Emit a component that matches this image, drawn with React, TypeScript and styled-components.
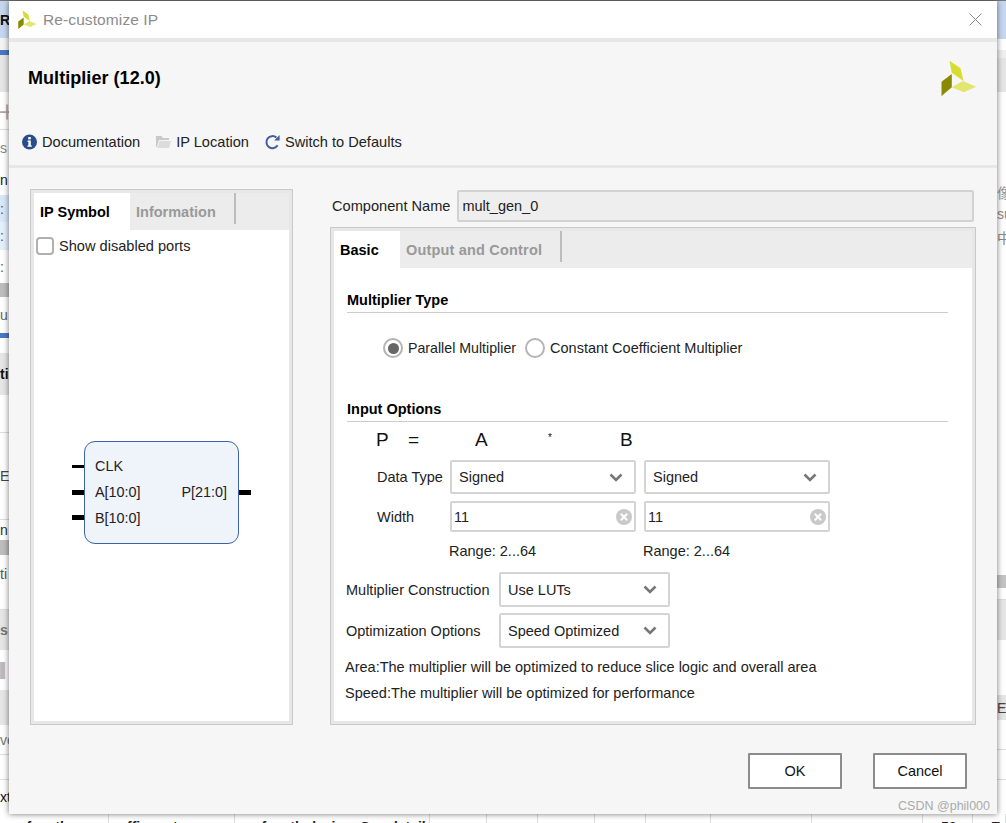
import React from "react";
import styled, { createGlobalStyle } from "styled-components";

const Global = createGlobalStyle`
  html, body { margin: 0; padding: 0; background: #fff; }
  body { font-family: "Liberation Sans", Arial, "Noto Sans CJK SC", sans-serif; color: #1c1c1c; }
`;

const Page = styled.div`
  position: relative;
  width: 1006px;
  height: 823px;
  overflow: hidden;
  background: #fff;
`;

const Backdrop = styled.div`
  display: grid;
  grid-template-columns: 9px 988px 9px;
  grid-template-rows: 814px 9px;
  width: 1006px;
  height: 823px;
`;

const Strip = styled.div`
  display: flex;
  flex-direction: column;
  overflow: hidden;
  background: #fff;
`;

const Segment = styled.div<{ $h: number; $bg?: string; $bold?: boolean; $fg?: string; $line?: boolean }>`
  flex: 0 0 ${(p) => p.$h}px;
  display: flex;
  align-items: center;
  justify-content: flex-start;
  overflow: hidden;
  white-space: nowrap;
  background: ${(p) => p.$bg ?? "#fff"};
  color: ${(p) => p.$fg ?? "#666"};
  font-size: 14px;
  font-weight: ${(p) => (p.$bold ? 700 : 400)};
  box-sizing: border-box;
  border-bottom: ${(p) => (p.$line ? "1px solid #ddd" : "0")};
`;

const Spacer = styled.div`
  background: #fff;
`;

const BottomStrip = styled.div`
  grid-column: 1 / -1;
  display: grid;
  grid-template-columns: 109px 126px 195px 57px 51px 57px 51px 65px 101px 111px 50px 1fr;
  background: #fff;
  overflow: hidden;
`;

const BottomCell = styled.div`
  border-right: 1px solid #ddd;
  overflow: hidden;
  white-space: nowrap;
  font-size: 14px;
  font-weight: 700;
  color: #222;
  padding: 6px 0 0 18px;
  line-height: 14px;
  box-sizing: border-box;
`;

const Dialog = styled.div`
  position: absolute;
  left: 9px;
  top: 1px;
  width: 988px;
  height: 813px;
  display: flex;
  flex-direction: column;
  background: #f6f6f6;
  box-shadow: 0 0 6px rgba(0, 0, 0, 0.55);
`;

const TopEdge = styled.div`
  position: absolute;
  left: 0;
  top: 0;
  width: 1006px;
  height: 1px;
  background: #777;
`;

const TitleBar = styled.div`
  flex: 0 0 41px;
  box-sizing: border-box;
  display: flex;
  align-items: center;
  gap: 6px;
  padding: 0 15px 0 9px;
  background: #fff;
  border-bottom: 4px solid #e7e7e7;
`;

const TitleText = styled.span`
  flex: 1;
  font-size: 15.5px;
  letter-spacing: 0.1px;
  color: #8c8c8c;
`;

const Header = styled.div`
  flex: 0 0 83px;
  box-sizing: border-box;
  display: flex;
  align-items: flex-start;
  justify-content: space-between;
  padding: 18px 20px 0 19px;
`;

const Heading = styled.h1`
  margin: 0;
  height: 36px;
  line-height: 36px;
  font-size: 18px;
  letter-spacing: 0.05px;
  font-weight: 700;
  color: #000;
`;

const Toolbar = styled.div`
  flex: 0 0 43px;
  box-sizing: border-box;
  display: flex;
  align-items: center;
  gap: 16px;
  padding: 0 0 7px 13px;
  border-bottom: 3px solid #e7e7e7;
`;

const ToolItem = styled.div`
  display: flex;
  align-items: center;
  gap: 5px;
  font-size: 14.6px;
  color: #222;
`;

const Body = styled.div`
  display: grid;
  grid-template-columns: 263px 646px;
  column-gap: 37px;
  padding: 21px 0 0 21px;
`;

const Frame = styled.div<{ $h: number }>`
  box-sizing: border-box;
  height: ${(p) => p.$h}px;
  border: 1px solid #c9c9c9;
  outline: 3px solid #e7e7e7;
  outline-offset: -4px;
  padding: 3px;
  display: flex;
  flex-direction: column;
`;

const TabStrip = styled.div`
  flex: 0 0 37px;
  display: flex;
  align-items: stretch;
  background: #ececec;
`;

const Tab = styled.div<{ $active?: boolean; $w: number; $sep?: boolean; $wide?: boolean }>`
  box-sizing: border-box;
  width: ${(p) => p.$w}px;
  display: flex;
  align-items: center;
  padding-left: 6px;
  font-size: 14.5px;
  font-weight: 700;
  letter-spacing: ${(p) => (p.$wide ? "0.18px" : "0")};
  background: ${(p) => (p.$active ? "#fff" : "transparent")};
  color: ${(p) => (p.$active ? "#000" : "#999")};
  position: relative;
  ${(p) =>
    p.$sep
      ? `&::after { content: ""; position: absolute; right: 0; top: 0; bottom: 6px; width: 2px; background: #bdbdbd; }`
      : ""}
`;

const PanelContent = styled.div`
  flex: 1;
  background: #fff;
`;

const CheckRow = styled.label`
  display: flex;
  align-items: center;
  gap: 5px;
  height: 18px;
  margin: 7px 0 0 2px;
  font-size: 14.6px;
  color: #222;
`;

const CheckBox = styled.span`
  box-sizing: border-box;
  width: 18px;
  height: 18px;
  border: 2px solid #b0b0b0;
  border-radius: 4px;
  background: #fff;
`;

const SymbolBox = styled.div`
  position: relative;
  box-sizing: border-box;
  width: 155px;
  height: 103px;
  margin: 186px 0 0 50px;
  padding: 11px 11px 0 10px;
  border: 1px solid #3d62a8;
  border-radius: 11px;
  background: #eff3fa;
  display: grid;
  grid-template-columns: 1fr auto;
  grid-auto-rows: 26px;
  align-items: center;
  font-size: 14.4px;
  color: #222;
`;

const Pin = styled.span<{ $side: "left" | "right"; $y: number; $t: number }>`
  position: absolute;
  ${(p) => p.$side}: -13px;
  top: ${(p) => p.$y}px;
  width: 12px;
  height: ${(p) => p.$t}px;
  background: #000;
`;

const RightColumn = styled.div`
  display: flex;
  flex-direction: column;
  margin-top: 1px;
`;

const NameRow = styled.div`
  display: flex;
  align-items: center;
  height: 32px;
  margin-bottom: 5px;
  padding-left: 2px;
  gap: 7px;
  font-size: 14.6px;
  color: #222;
`;

const NameInput = styled.div`
  box-sizing: border-box;
  width: 517px;
  height: 32px;
  display: flex;
  align-items: center;
  padding-left: 3px;
  font-size: 14.5px;
  color: #222;
  background: #eee;
  border: 2px solid #d2d2d2;
  border-radius: 2px;
`;

const TabContent = styled.div`
  flex: 1;
  background: #fff;
  padding: 0 24px 0 12px;
  font-size: 14.5px;
  color: #222;
`;

const SectionTitle = styled.div<{ $top: number }>`
  margin: ${(p) => p.$top}px 0 0 1px;
  height: 18px;
  line-height: 18px;
  padding-bottom: 3px;
  border-bottom: 1px solid #ccc;
  font-size: 14.5px;
  font-weight: 700;
  color: #000;
`;

const RadioRow = styled.div`
  display: flex;
  align-items: center;
  height: 20px;
  margin: 25px 0 0 37px;
  gap: 5px;
`;

const RadioLabel = styled.span<{ $size: number }>`
  margin-right: 4px;
  font-size: ${(p) => p.$size}px;
`;

const Radio = styled.span<{ $on?: boolean }>`
  box-sizing: border-box;
  width: 20px;
  height: 20px;
  border: 2px solid #b4b4b4;
  border-radius: 50%;
  background: #fff;
  display: flex;
  align-items: center;
  justify-content: center;
  &::after {
    content: "";
    display: ${(p) => (p.$on ? "block" : "none")};
    width: 11px;
    height: 11px;
    border-radius: 50%;
    background: #666;
  }
`;

const Equation = styled.div`
  display: grid;
  grid-template-columns: 32px 67px 73px 72px 20px;
  align-items: center;
  height: 18px;
  margin: 7px 0 0 30px;
  font-size: 19px;
  color: #111;
`;

const Star = styled.span`
  font-size: 10px;
  margin-top: -6px;
`;

const OptionsGrid = styled.div`
  display: grid;
  grid-template-columns: 65px 186px 186px;
  column-gap: 8px;
  grid-template-rows: 34px 31px 18px;
  row-gap: 7px;
  align-items: center;
  margin: 13px 0 0 31px;
`;

const FieldLabel = styled.span`
  white-space: nowrap;
`;

const RangeText = styled.span`
  margin-top: 5px;
  margin-left: -1px;
`;

const SelectBox = styled.div`
  box-sizing: border-box;
  height: 100%;
  display: flex;
  align-items: center;
  justify-content: space-between;
  padding: 0 11px 0 7px;
  background: #fff;
  border: 2px solid #d4d4d4;
  border-radius: 2px;
`;

const WidthBox = styled(SelectBox)`
  padding: 0 2px 0 2px;
`;

const ExtraGrid = styled.div`
  display: grid;
  grid-template-columns: 153px 171px;
  grid-template-rows: 35px 35px;
  row-gap: 6px;
  align-items: center;
  margin-top: 15px;
`;

const Note = styled.div<{ $top: number }>`
  margin: ${(p) => p.$top}px 0 0 -1px;
  height: 18px;
  line-height: 18px;
`;

const Footer = styled.div`
  display: flex;
  justify-content: flex-end;
  gap: 31px;
  padding: 28px 30px 0 0;
`;

const Button = styled.button`
  box-sizing: border-box;
  width: 94px;
  height: 36px;
  padding: 0;
  border: 2px solid #8c8c8c;
  border-radius: 1px;
  background: #fff;
  font-family: "Liberation Sans", Arial, sans-serif;
  font-size: 14.5px;
  color: #111;
`;

const Watermark = styled.span`
  position: absolute;
  right: 7px;
  bottom: 0;
  font-size: 12.5px;
  line-height: 16px;
  color: #aaa;
`;

const Logo = ({ size }: { size: number }) => (
  <svg width={size} height={size} viewBox="0 0 35 36" aria-hidden>
    <polygon points="0,21.7 10.3,14 10.3,27.3 0,36" fill="#8a8a00" />
    <polygon points="8,0.7 19,8.3 22,21 10.3,12.7" fill="#d8dc2e" />
    <polygon points="10.3,27.3 21.3,21 34.7,26.7 22.3,32.3" fill="#e2e66e" />
  </svg>
);

const CloseIcon = () => (
  <svg width="13" height="13" viewBox="0 0 13 13" aria-hidden>
    <path d="M0.5 0.5 L12.5 12.5 M12.5 0.5 L0.5 12.5" stroke="#888" strokeWidth="1" fill="none" />
  </svg>
);

const InfoIcon = () => (
  <svg width="15" height="16" viewBox="0 0 15 16" aria-hidden>
    <circle cx="7.5" cy="8" r="7.5" fill="#2b4c8c" />
    <rect x="6.2" y="3" width="2.6" height="2.4" fill="#fff" />
    <path d="M5.6 6.6 H8.8 V11.4 H9.8 V12.8 H5.4 V11.4 H6.4 V8 H5.6 Z" fill="#fff" />
  </svg>
);

const FolderIcon = () => (
  <svg width="15" height="15" viewBox="0 0 15 15" aria-hidden>
    <path d="M0 2 H5.5 L7 4 H13 V6 H3 L0.8 13 H0 Z" fill="#c9c9c9" />
    <path d="M3.6 7 H15 L13 14 H1.4 Z" fill="#dcdcdc" />
  </svg>
);

const RefreshIcon = () => (
  <svg width="15" height="16" viewBox="0 0 15 16" aria-hidden>
    <path d="M12.6 11.2 A6 6 0 1 1 11.4 3.6" stroke="#3f5f9e" strokeWidth="2" fill="none" />
    <path d="M9.2 6.4 H14.6 V1 Z" fill="#3f5f9e" />
  </svg>
);

const Chevron = () => (
  <svg width="14" height="9" viewBox="0 0 14 9" aria-hidden>
    <path d="M1.5 1.5 L7 7 L12.5 1.5" stroke="#777" strokeWidth="2.6" fill="none" />
  </svg>
);

const ClearIcon = () => (
  <svg width="16" height="16" viewBox="0 0 16 16" aria-hidden>
    <circle cx="8" cy="8" r="8" fill="#c9c9c9" />
    <path d="M4.8 4.8 L11.2 11.2 M11.2 4.8 L4.8 11.2" stroke="#fff" strokeWidth="2" />
  </svg>
);

const leftSegments: { h: number; bg?: string; t?: string; bold?: boolean; fg?: string; line?: boolean }[] = [
  { h: 1, bg: "#777" },
  { h: 37, bg: "#c7d7f0", t: "R", bold: true, fg: "#111" },
  { h: 12, bg: "#f4f4f4" },
  { h: 5, bg: "#4a78c4" },
  { h: 37, bg: "#e6e6e6" },
  { h: 38, bg: "#fff", t: "╋", fg: "#aaa", line: true },
  { h: 35, bg: "#fff", t: "s", fg: "#888" },
  { h: 30, bg: "#fff", t: "n", fg: "#222" },
  { h: 27, bg: "#d9e8f8", t: ":", fg: "#555" },
  { h: 28, bg: "#e4f0fb", t: ":", fg: "#555" },
  { h: 33, bg: "#fff", t: ":", fg: "#555" },
  { h: 14, bg: "#bdbdbd" },
  { h: 36, bg: "#fff", t: "u", fg: "#666" },
  { h: 5, bg: "#4a78c4" },
  { h: 15, bg: "#fff" },
  { h: 42, bg: "#e6e6e6", t: "ti", bold: true, fg: "#111" },
  { h: 38, bg: "#fff", line: true },
  { h: 87, bg: "#fff", t: "E:", fg: "#444", line: true },
  { h: 20, bg: "#fff", t: "n", fg: "#333" },
  { h: 15, bg: "#bdbdbd" },
  { h: 38, bg: "#fff", t: "ti", fg: "#555" },
  { h: 17, bg: "#fff", line: true },
  { h: 40, bg: "#e6e6e6", t: "s", bold: true, fg: "#777" },
  { h: 40, bg: "#fff", t: "▌", fg: "#bbb" },
  { h: 35, bg: "#e6e6e6" },
  { h: 30, bg: "#fff", t: "ve", fg: "#777", line: true },
  { h: 25, bg: "#fff", line: true },
  { h: 34, bg: "#fff", t: "xt", fg: "#111" },
];

const rightSegments: { h: number; bg?: string; t?: string; fg?: string; line?: boolean }[] = [
  { h: 1, bg: "#777" },
  { h: 38, bg: "#c7d7f0" },
  { h: 11, bg: "#fff" },
  { h: 8, bg: "#f0f0f0" },
  { h: 34, bg: "#e6e6e6" },
  { h: 90, bg: "#fff" },
  { h: 20, bg: "#fff", t: "像", fg: "#999" },
  { h: 23, bg: "#fff", t: "su", fg: "#888" },
  { h: 23, bg: "#fff", t: "中,", fg: "#888" },
  { h: 327, bg: "#fff" },
  { h: 13, bg: "#c4c4c4" },
  { h: 12, bg: "#fff", line: true },
  { h: 40, bg: "#e6e6e6" },
  { h: 55, bg: "#fff" },
  { h: 25, bg: "#e6e6e6", t: "E", fg: "#444" },
  { h: 30, bg: "#fff", line: true },
  { h: 30, bg: "#fff", line: true },
];

const bottomTexts = ["of math", "ffi ment", "of math design. See details", "", "", "", "", "", "", "", "50", "E"];

export default function App() {
  return (
    <Page>
      <Global />
      <Backdrop>
        <Strip>
          {leftSegments.map((s, i) => (
            <Segment key={i} $h={s.h} $bg={s.bg} $bold={s.bold} $fg={s.fg} $line={s.line}>
              {s.t}
            </Segment>
          ))}
        </Strip>
        <Spacer />
        <Strip>
          {rightSegments.map((s, i) => (
            <Segment key={i} $h={s.h} $bg={s.bg} $fg={s.fg} $line={s.line}>
              {s.t}
            </Segment>
          ))}
        </Strip>
        <BottomStrip>
          {bottomTexts.map((t, i) => (
            <BottomCell key={i}>{t}</BottomCell>
          ))}
        </BottomStrip>
      </Backdrop>
      <TopEdge />
      <Dialog>
        <TitleBar>
          <Logo size={19} />
          <TitleText>Re-customize IP</TitleText>
          <CloseIcon />
        </TitleBar>
        <Header>
          <Heading>Multiplier (12.0)</Heading>
          <Logo size={36} />
        </Header>
        <Toolbar>
          <ToolItem>
            <InfoIcon />
            Documentation
          </ToolItem>
          <ToolItem>
            <FolderIcon />
            IP Location
          </ToolItem>
          <ToolItem>
            <RefreshIcon />
            Switch to Defaults
          </ToolItem>
        </Toolbar>
        <Body>
          <Frame $h={536}>
            <TabStrip>
              <Tab $active $w={96}>IP Symbol</Tab>
              <Tab $w={106} $sep>Information</Tab>
            </TabStrip>
            <PanelContent>
              <CheckRow>
                <CheckBox />
                Show disabled ports
              </CheckRow>
              <SymbolBox>
                <Pin $side="left" $y={23} $t={3} />
                <Pin $side="left" $y={48} $t={5} />
                <Pin $side="left" $y={73} $t={5} />
                <Pin $side="right" $y={48} $t={5} />
                <span>CLK</span>
                <span />
                <span>A[10:0]</span>
                <span>P[21:0]</span>
                <span>B[10:0]</span>
                <span />
              </SymbolBox>
            </PanelContent>
          </Frame>
          <RightColumn>
            <NameRow>
              Component Name
              <NameInput>mult_gen_0</NameInput>
            </NameRow>
            <Frame $h={498}>
              <TabStrip>
                <Tab $active $w={66}>Basic</Tab>
                <Tab $w={162} $sep $wide>Output and Control</Tab>
              </TabStrip>
              <TabContent>
                <SectionTitle $top={23}>Multiplier Type</SectionTitle>
                <RadioRow>
                  <Radio $on />
                  <RadioLabel $size={14.2}>Parallel Multiplier</RadioLabel>
                  <Radio />
                  <RadioLabel $size={14.5}>Constant Coefficient Multiplier</RadioLabel>
                </RadioRow>
                <SectionTitle $top={42}>Input Options</SectionTitle>
                <Equation>
                  <span>P</span>
                  <span>=</span>
                  <span>A</span>
                  <Star>*</Star>
                  <span>B</span>
                </Equation>
                <OptionsGrid>
                  <FieldLabel>Data Type</FieldLabel>
                  <SelectBox>Signed<Chevron /></SelectBox>
                  <SelectBox>Signed<Chevron /></SelectBox>
                  <FieldLabel>Width</FieldLabel>
                  <WidthBox>11<ClearIcon /></WidthBox>
                  <WidthBox>11<ClearIcon /></WidthBox>
                  <span />
                  <RangeText>Range: 2...64</RangeText>
                  <RangeText>Range: 2...64</RangeText>
                </OptionsGrid>
                <ExtraGrid>
                  <FieldLabel>Multiplier Construction</FieldLabel>
                  <SelectBox>Use LUTs<Chevron /></SelectBox>
                  <FieldLabel>Optimization Options</FieldLabel>
                  <SelectBox>Speed Optimized<Chevron /></SelectBox>
                </ExtraGrid>
                <Note $top={10}>Area:The multiplier will be optimized to reduce slice logic and overall area</Note>
                <Note $top={8}>Speed:The multiplier will be optimized for performance</Note>
              </TabContent>
            </Frame>
          </RightColumn>
        </Body>
        <Footer>
          <Button>OK</Button>
          <Button>Cancel</Button>
        </Footer>
        <Watermark>CSDN @phil000</Watermark>
      </Dialog>
    </Page>
  );
}
